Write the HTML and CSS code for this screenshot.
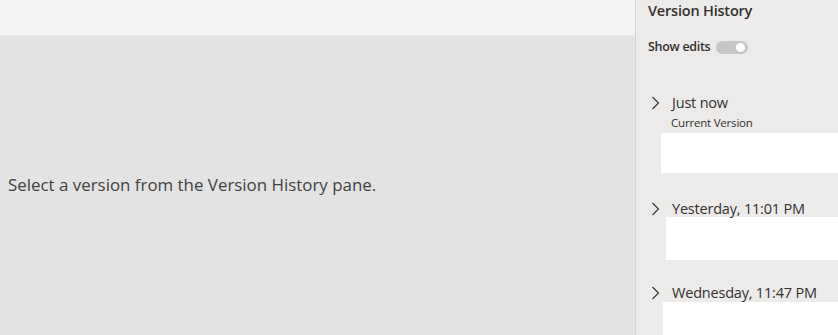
FILE: index.html
```html
<!DOCTYPE html>
<html lang="en">
<head>
  <meta charset="UTF-8" />
  <title>Version History</title>
  <link rel="stylesheet" href="styles.css">
</head>
<body>

<div id="app">
  <div id="doc-area">
    <div id="doc-toolbar"></div>
    <div id="doc-content">
      <div class="empty-msg">Select a version from the Version History pane.</div>
    </div>
  </div>

  <div id="history-pane">
    <div class="pane-title">Version History</div>
    <div class="show-edits">
      <span>Show edits</span>
      <span class="toggle"><span class="knob"></span></span>
    </div>

    <div class="version v1">
      <div class="version-head">
        <svg class="chev" width="9" height="14" viewBox="0 0 9 14"><polyline points="1.5,1 7.5,7 1.5,13" fill="none" stroke="#323130" stroke-width="1.1"/></svg>
        <span class="version-name">Just now</span>
      </div>
      <div class="version-sub">Current Version</div>
      <div class="thumb thumb-a"></div>
    </div>

    <div class="version v2">
      <div class="version-head">
        <svg class="chev" width="9" height="14" viewBox="0 0 9 14"><polyline points="1.5,1 7.5,7 1.5,13" fill="none" stroke="#323130" stroke-width="1.1"/></svg>
        <span class="version-name">Yesterday, 11:01 PM</span>
      </div>
      <div class="thumb thumb-b"></div>
    </div>

    <div class="version v3">
      <div class="version-head">
        <svg class="chev" width="9" height="14" viewBox="0 0 9 14"><polyline points="1.5,1 7.5,7 1.5,13" fill="none" stroke="#323130" stroke-width="1.1"/></svg>
        <span class="version-name">Wednesday, 11:47 PM</span>
      </div>
      <div class="thumb thumb-c"></div>
    </div>
  </div>
</div>

</body>
</html>
```

FILE: styles.css
```css
html, body {
  margin: 0;
  height: 100%;
  overflow: hidden;
}

body {
  font-family: "Open Sans", "Noto Sans", sans-serif;
  color: #323130;
}

#app {
  display: flex;
  height: 335px;
}

#doc-area {
  width: 635px;
  display: flex;
  flex-direction: column;
  border-right: 1px solid #d6d4d2;
}

#doc-toolbar {
  height: 35px;
  background: #f4f4f4;
  border-bottom: 1px solid #e9e9e9;
}

#doc-content {
  flex: 1;
  background: #e3e3e3;
  display: flex;
  align-items: center;
  padding-left: 8px;
}

.empty-msg {
  font-size: 16.9px;
  color: #424242;
  margin-top: -3px;
}

#history-pane {
  flex: 1;
  background: #edebe9;
  padding-left: 12px;
  overflow: hidden;
}

.pane-title {
  font-size: 14.5px;
  font-weight: 600;
  margin-top: 1px;
  line-height: 20px;
  letter-spacing: -0.2px;
}

.show-edits {
  display: flex;
  align-items: center;
  gap: 6px;
  margin-top: 18px;
  font-size: 12.5px;
  font-weight: 600;
  letter-spacing: -0.3px;
  line-height: 16px;
}

.toggle {
  width: 32px;
  height: 13px;
  border-radius: 7px;
  background: #c8c6c4;
  position: relative;
}

.knob {
  position: absolute;
  right: 3px;
  top: 2px;
  width: 9px;
  height: 9px;
  border-radius: 50%;
  background: #fff;
}

.v1 { margin-top: 38px; }
.v2 { margin-top: 26px; }
.v3 { margin-top: 23px; }

.version-head {
  display: flex;
  align-items: center;
  gap: 12px;
  padding-left: 3px;
  font-size: 14.5px;
  line-height: 20px;
  letter-spacing: -0.2px;
}

.chev {
  display: block;
}

.version-sub {
  font-size: 11.5px;
  padding-left: 23px;
  margin-top: 2px;
  line-height: 16px;
  letter-spacing: -0.2px;
}

.thumb {
  background: #fff;
  height: 40px;
  margin-top: 2px;
}

.thumb-a { margin-left: 13px; }
.thumb-b { margin-left: 18px; height: 43px; margin-top: -2px; }
.thumb-c { margin-left: 15px; height: 43px; margin-top: -1px; }
```
